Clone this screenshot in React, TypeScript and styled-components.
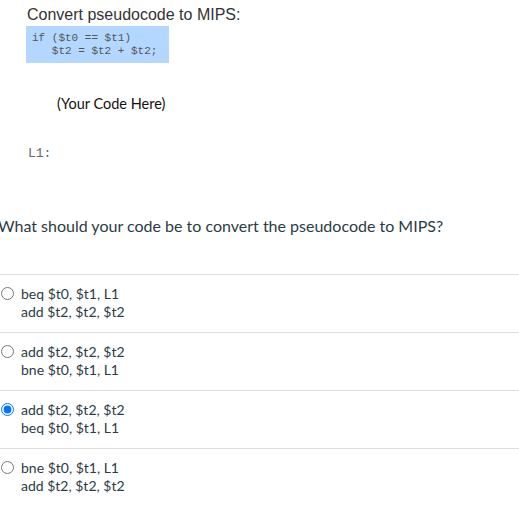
import React from "react";
import styled, { createGlobalStyle } from "styled-components";

const Global = createGlobalStyle`
  html, body { margin: 0; padding: 0; background: #fff; }
  body { font-family: Lato, "Open Sans", sans-serif; color: #2d3b45; }
`;

const Page = styled.div`
  width: 519px;
  height: 513px;
  overflow: hidden;
  display: flex;
  flex-direction: column;
`;

const Prompt = styled.div`
  padding: 5px 0 0 26px;
  display: flex;
  flex-direction: column;
  align-items: flex-start;
`;

const Title = styled.div`
  font-family: "Liberation Sans", Arial, sans-serif;
  font-size: 16px;
  line-height: 19px;
  color: #333;
  padding-left: 1px;
`;

const CodeBox = styled.pre`
  margin: 2px 0 0 0;
  width: 143px;
  box-sizing: border-box;
  background: #b3d7ff;
  padding: 6px 6px 5px 6px;
  font-family: "Liberation Mono", "Courier New", monospace;
  font-size: 11px;
  line-height: 13px;
  color: #555;
`;

const Placeholder = styled.div`
  margin: 32px 0 0 31px;
  font-size: 14.5px;
  line-height: 17px;
  color: #111;
`;

const Label = styled.div`
  margin: 34px 0 0 2px;
  font-family: "Liberation Mono", "Courier New", monospace;
  font-size: 13px;
  line-height: 16px;
  color: #666;
`;

const Question = styled.div`
  margin: 52px 0 0 -2px;
  font-size: 16px;
  line-height: 24px;
  color: #2d3b45;
  white-space: nowrap;
`;

const Answers = styled.div`
  margin-top: 36px;
  display: flex;
  flex-direction: column;
`;

const Answer = styled.label`
  display: flex;
  align-items: flex-start;
  border-top: 1px solid #ddd;
  padding: 10px 0 11px 0;
  font-size: 14px;
  line-height: 18px;
  color: #2d3b45;
`;

const Radio = styled.input`
  margin: 2px 7px 0 1px;
  width: 13px;
  height: 13px;
  accent-color: #0075ff;
  flex: none;
`;

const Lines = styled.div`
  display: flex;
  flex-direction: column;
`;

const answers = [
  ["beq $t0, $t1, L1", "add $t2, $t2, $t2"],
  ["add $t2, $t2, $t2", "bne $t0, $t1, L1"],
  ["add $t2, $t2, $t2", "beq $t0, $t1, L1"],
  ["bne $t0, $t1, L1", "add $t2, $t2, $t2"],
];

export default function App() {
  return (
    <Page>
      <Global />
      <Prompt>
        <Title>Convert pseudocode to MIPS:</Title>
        <CodeBox>{"if ($t0 == $t1)\n   $t2 = $t2 + $t2;"}</CodeBox>
        <Placeholder>(Your Code Here)</Placeholder>
        <Label>L1:</Label>
      </Prompt>
      <Question>What should your code be to convert the pseudocode to MIPS?</Question>
      <Answers>
        {answers.map((a, i) => (
          <Answer key={i}>
            <Radio type="radio" name="q" defaultChecked={i === 2} />
            <Lines>
              <span>{a[0]}</span>
              <span>{a[1]}</span>
            </Lines>
          </Answer>
        ))}
      </Answers>
    </Page>
  );
}
